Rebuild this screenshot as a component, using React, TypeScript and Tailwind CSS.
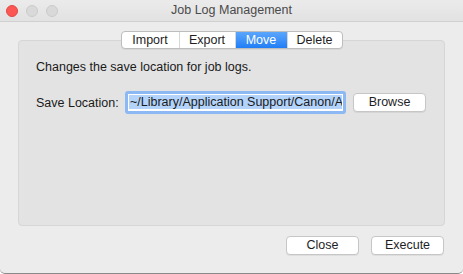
const tabs = ["Import", "Export", "Move", "Delete"];

function TrafficLight({ color, border }: { color: string; border: string }) {
  return <span className={`block h-[12px] w-[12px] rounded-full border ${color} ${border}`} />;
}

function MacButton({ label, className = "" }: { label: string; className?: string }) {
  return (
    <button
      className={`h-[19px] w-[73px] rounded-[4px] border border-[#c6c6c6] bg-white text-[12.5px] leading-none text-[#1e1e1e] shadow-[0_1px_0_rgba(0,0,0,0.06)] ${className}`}
    >
      {label}
    </button>
  );
}

export default function App() {
  return (
    <div
      className="flex h-[274px] w-[463px] flex-col overflow-hidden rounded-b-[5px] border-b border-[#8a8a8a] bg-[#ececec]"
      style={{ fontFamily: '"Liberation Sans", Arial, sans-serif' }}
    >
      {/* Title bar */}
      <div className="relative flex h-[22px] shrink-0 items-center border-b border-[#d0d0d0] bg-gradient-to-b from-[#ebebeb] to-[#e2e2e2]">
        <div className="flex items-center gap-[8px] pl-[6px]">
          <TrafficLight color="bg-[#fc5753]" border="border-[#de4a45]" />
          <TrafficLight color="bg-[#d9d9d9]" border="border-[#cbcbcb]" />
          <TrafficLight color="bg-[#d9d9d9]" border="border-[#cbcbcb]" />
        </div>
        <div className="absolute inset-0 flex items-center justify-center text-[12.5px] text-[#4a4a4a]">
          Job Log Management
        </div>
      </div>

      {/* Tabs */}
      <div className="relative z-10 mt-[9px] flex justify-center">
        <div className="flex h-[18px] overflow-hidden rounded-[4px] border border-[#bdbdbd] bg-white shadow-[0_1px_0_rgba(0,0,0,0.05)]">
          {tabs.map((t, i) => {
            const active = t === "Move";
            const widths = ["w-[57px]", "w-[56px]", "w-[52px]", "w-[55px]"];
            return (
              <div
                key={t}
                className={`flex items-center justify-center text-[12.5px] leading-none ${widths[i]} ${
                  i > 0 ? "border-l border-[#d6d6d6]" : ""
                } ${active ? "bg-gradient-to-b from-[#5aa6fc] to-[#1f7ef6] text-white" : "text-[#1e1e1e]"}`}
              >
                {t}
              </div>
            );
          })}
        </div>
      </div>

      {/* Group box */}
      <div className="mx-[18px] -mt-[9px] flex h-[186px] shrink-0 flex-col rounded-[4px] border border-[#d6d6d6] bg-[#e3e3e3] pl-[17px] pt-[18px]">
        <p className="text-[12.5px] leading-[16px] text-[#1a1a1a]">Changes the save location for job logs.</p>
        <div className="mt-[16px] flex items-center">
          <span className="w-[82px] whitespace-nowrap text-[12.5px] leading-[16px] text-[#1a1a1a]">Save Location:</span>
          <div className="ml-[7px] flex h-[23px] w-[221px] items-center overflow-hidden rounded-[3px] border-[3px] border-[#8cb8f4] bg-white">
            <div className="ml-[1px] w-[213px] overflow-hidden whitespace-nowrap text-[12.5px] leading-[15px] text-[#1a1a1a]">
              <span className="bg-[#b3d3fb] pl-[1px]">~/Library/Application Support/Canon/A</span>
            </div>
          </div>
          <MacButton label="Browse" className="ml-[7px]" />
        </div>
      </div>

      {/* Bottom buttons */}
      <div className="mt-[10px] flex justify-end gap-[12px] pr-[19px]">
        <MacButton label="Close" />
        <MacButton label="Execute" />
      </div>
    </div>
  );
}
